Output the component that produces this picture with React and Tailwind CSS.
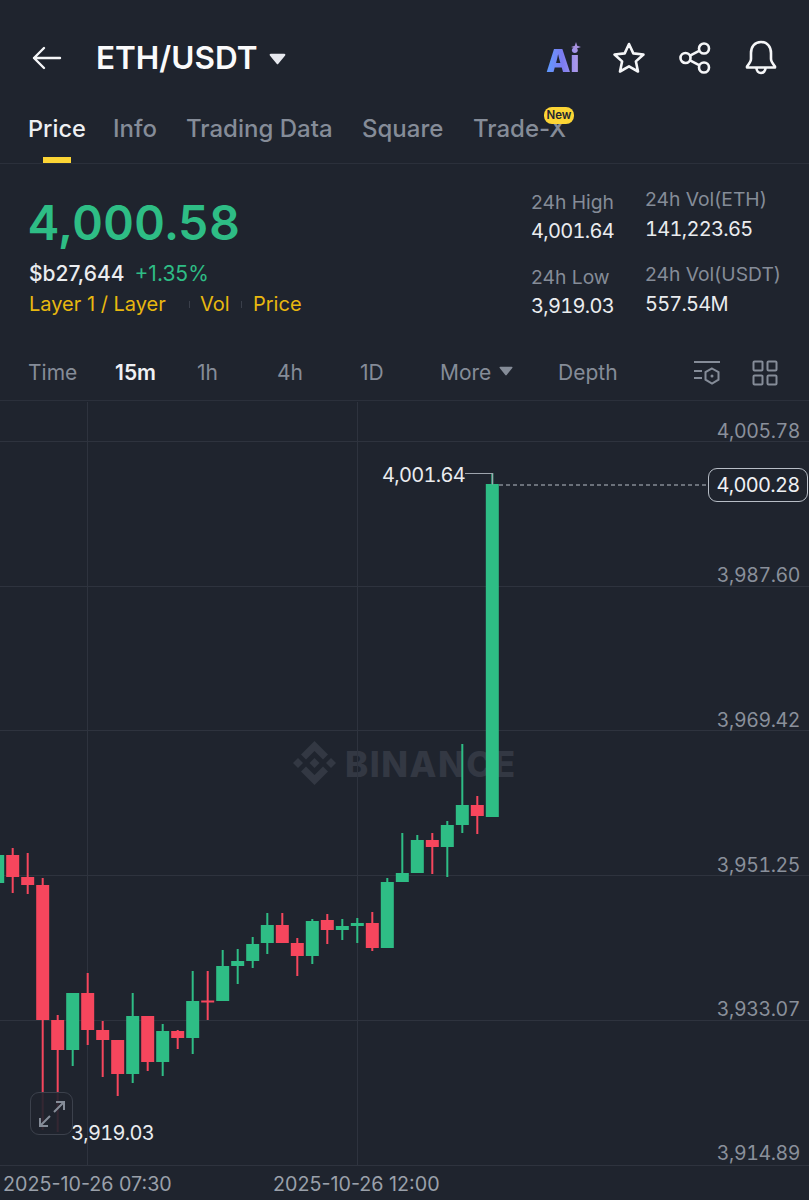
import React from "react";

const G = "#2EBD85";
const R = "#F6465D";
// x, wickTop, wickBottom, bodyTop, bodyBottom, up
const candles = [
  [-2.3, 846, 890, 855, 883, 1],
  [12.7, 848, 893, 855, 877, 0],
  [27.7, 853, 894, 877, 885, 0],
  [42.7, 878, 1130, 885, 1020, 0],
  [57.7, 1015, 1132, 1020, 1050, 0],
  [72.7, 993, 1066, 993, 1050, 1],
  [87.7, 973, 1045, 993, 1030, 0],
  [102.7, 1021, 1077, 1030, 1040, 0],
  [117.7, 1040, 1096, 1040, 1074, 0],
  [132.7, 993, 1083, 1016, 1074, 1],
  [147.7, 1016, 1071, 1016, 1062, 0],
  [162.7, 1024, 1076, 1031, 1062, 1],
  [177.7, 1030, 1049, 1031, 1038, 0],
  [192.7, 971, 1054, 1001, 1038, 1],
  [207.7, 971, 1020, 1000.5, 1002.5, 0],
  [222.7, 950, 1001, 966, 1001, 1],
  [237.7, 949, 984, 961, 966, 1],
  [252.7, 937, 968, 944, 961, 1],
  [267.3, 913, 954, 925, 943, 1],
  [282.3, 913, 943, 925, 943, 0],
  [297.3, 938, 976, 943, 956, 0],
  [312.3, 919, 964, 921, 956, 1],
  [327.3, 914, 944, 920, 930, 0],
  [342.3, 919, 940, 926, 930, 1],
  [357.3, 918, 943, 923, 926, 1],
  [372.3, 912, 951, 923, 948, 0],
  [387.3, 878, 948, 882, 948, 1],
  [402.3, 833, 882, 873, 882, 1],
  [417.3, 835, 873, 840, 873, 1],
  [432.3, 833, 874, 840, 847, 0],
  [447.3, 821, 877, 825, 847, 1],
  [462.3, 744, 833, 805, 825, 1],
  [477.3, 796, 834, 805, 816, 0],
  [492.3, 473, 817, 484, 817, 1],
];

function Caret({ className }) {
  return (
    <svg className={className} viewBox="0 0 16 11" fill="currentColor">
      <path d="M1.6 0.5h12.8a1 1 0 0 1 .8 1.6L8.8 10a1 1 0 0 1-1.6 0L.8 2.1A1 1 0 0 1 1.6.5z" />
    </svg>
  );
}

function Chart() {
  return (
    <svg className="absolute inset-0 w-[809px] h-[799px]" viewBox="0 401 809 799">
      {[441, 586, 730, 875, 1020, 1165].map((y) => (
        <line key={y} x1="0" x2="809" y1={y + 0.5} y2={y + 0.5} stroke="#2E333E" strokeWidth="1" />
      ))}
      {[87.5, 357.5].map((x) => (
        <line key={x} x1={x} x2={x} y1="402" y2="1165" stroke="#2E333E" strokeWidth="1" />
      ))}
      <g fill="#333843" transform="translate(314.5 763)">
        <path d="M0-22L13.500-8.500 8.500-3.500 0-12-8.500-3.500-13.500-8.500z" />
        <path d="M0 22L13.500 8.500 8.500 3.500 0 12-8.500 3.500-13.500 8.500z" />
        <path d="M0-5L5 0 0 5-5 0z" />
        <path d="M-16.500-5L-11.500 0-16.500 5-21.500 0z" />
        <path d="M16.500-5L21.500 0 16.500 5 11.500 0z" />
      </g>
      {candles.map(([x, wt, wb, bt, bb, up], i) => (
        <g key={i} fill={up ? G : R}>
          <rect x={x - 1} y={wt} width="2" height={wb - wt} />
          <rect x={x - 6.5} y={bt} width="13" height={bb - bt} />
        </g>
      ))}
      <path d="M465 473.5h27.5v11" fill="none" stroke="#9EA4AD" strokeWidth="1.2" />
      <line x1="499" x2="707" y1="485" y2="485" stroke="#B7BDC6" strokeWidth="1" strokeDasharray="4 3" />
    </svg>
  );
}

function AxisLabel({ top, children }) {
  return (
    <div className={`absolute right-[9px] text-[19.500px] leading-[24px] tabular-nums tracking-[-0.400px] text-[#8A909B] ${top}`}>{children}</div>
  );
}

export default function App() {
  return (
    <div
      className="w-[809px] h-[1200px] overflow-hidden bg-[#1F242E] text-white"
      style={{ fontFamily: "Inter, 'Liberation Sans', sans-serif" }}
    >
      {/* top bar */}
      <div className="h-[116px] w-full flex items-center">
        <svg className="ml-[32px] w-[30px] h-[24px]" viewBox="0 0 30 24" fill="none" stroke="#F5F6F8" strokeWidth="2.4" strokeLinecap="round" strokeLinejoin="round">
          <path d="M28 12H2M12 2L2 12l10 10" />
        </svg>
        <div className="ml-[34px] text-[31.500px] leading-[40px] font-semibold text-[#FAFAFB]">ETH/USDT</div>
        <Caret className="ml-[11px] mt-[1px] w-[17px] h-[12px] text-[#E6E8EE]" />
        <div className="ml-auto mr-[31px] flex items-center">
          <div className="relative w-[36px] h-[32px] mr-[30px] mt-[6px]">
            <span className="absolute left-0 top-[-3px] text-[31px] leading-[38px] font-black tracking-[-0.500px] bg-gradient-to-r from-[#5B9BFF] via-[#7B7BF0] to-[#B39CE8] bg-clip-text text-transparent">Ai</span>
            <svg className="absolute left-[25px] top-[-3px] w-[10px] h-[10px]" viewBox="0 0 10 10" fill="#A892E0">
              <path d="M5 0l1.200 3.800L10 5 6.200 6.200 5 10 3.800 6.200 0 5l3.800-1.200z" />
            </svg>
          </div>
          <svg className="w-[34px] h-[34px] mr-[32px]" viewBox="0 0 34 34" fill="none" stroke="#F5F6F8" strokeWidth="2.6" strokeLinejoin="round">
            <path d="M17 3l4.300 9.400 10.200 1.100-7.600 6.900 2.100 10.100L17 25.400l-9 5.100 2.100-10.100-7.600-6.900 10.200-1.100z" />
          </svg>
          <svg className="w-[34px] h-[34px] mr-[32px]" viewBox="0 0 34 34" fill="none" stroke="#F5F6F8" strokeWidth="2.6">
            <circle cx="26" cy="7.500" r="5" />
            <circle cx="26" cy="26.500" r="5" />
            <circle cx="7.500" cy="17" r="5" />
            <path d="M12 14.700l9.600-5M12 19.300l9.600 5" />
          </svg>
          <svg className="w-[34px] h-[36px]" viewBox="0 0 34 36" fill="none" stroke="#F5F6F8" strokeWidth="2.6" strokeLinejoin="round">
            <path d="M17 2c-6.500 0-10 5-10 11v6c0 2.500-1.600 4.500-4 7.500v1h28v-1c-2.400-3-4-5-4-7.500v-6c0-6-3.500-11-10-11z" />
            <path d="M12.500 28c0 3 2 5 4.500 5s4.500-2 4.500-5" />
          </svg>
        </div>
      </div>

      {/* tabs */}
      <div className="h-[48px] border-b border-[#2B303B] flex text-[24px] leading-[26px] text-[#858C98] font-medium">
        <div className="ml-[28px] w-[85px] flex flex-col">
          <span className="text-[#EEF0F3] text-[23.500px]">Price</span>
          <span className="mt-[15px] ml-[15px] w-[28px] h-[6px] bg-[#FCD535]" />
        </div>
        <div className="w-[73px]">Info</div>
        <div className="w-[176px]">Trading Data</div>
        <div className="w-[111px]">Square</div>
        <div className="relative">
          Trade-X
          <span className="absolute left-[71px] top-[-9px] w-[30px] h-[17px] rounded-[8px] bg-[#FCD535] text-[#1F2430] text-[11.500px] leading-[17px] font-semibold text-center">New</span>
        </div>
      </div>

      {/* market stats */}
      <div className="h-[181px] flex">
        <div className="w-[531px] pl-[28px] pt-[35px]">
          <div className="text-[48px] leading-[48px] font-semibold tabular-nums text-[#2EBD85]">4,000.58</div>
          <div className="mt-[13px] ml-[1px] flex text-[21px] leading-[28px]">
            <span className="text-[#EAECEF] font-medium">$b27,644</span>
            <span className="ml-[10px] text-[#2EBD85]">+1.35%</span>
          </div>
          <div className="mt-[2px] ml-[1px] flex items-center text-[20px] leading-[28px] text-[#E8B80F]">
            <span className="w-[160px]">Layer 1 / Layer</span>
            <span className="w-[1px] h-[7px] bg-[#3A3F4A]" />
            <span className="ml-[10px] w-[41px]">Vol</span>
            <span className="w-[1px] h-[7px] bg-[#3A3F4A]" />
            <span className="ml-[11px]">Price</span>
          </div>
        </div>
        <div className="w-[114px] pt-[24px] text-[19.300px] leading-[28px]">
          <div className="text-[#858C98]">24h High</div>
          <div className="mt-[1px] text-[20px] tabular-nums tracking-[-0.700px] text-[#EAECEF]">4,001.64</div>
          <div className="mt-[18px] text-[#858C98]">24h Low</div>
          <div className="mt-[1px] text-[20px] tabular-nums tracking-[-0.700px] text-[#EAECEF]">3,919.03</div>
        </div>
        <div className="pt-[21px] text-[19.300px] leading-[28px]">
          <div className="text-[#858C98]">24h Vol(ETH)</div>
          <div className="mt-[2px] text-[20px] tabular-nums tracking-[-0.700px] text-[#EAECEF]">141,223.65</div>
          <div className="mt-[17px] text-[#858C98]">24h Vol(USDT)</div>
          <div className="mt-[2px] text-[20px] tabular-nums tracking-[-0.800px] text-[#EAECEF]">557.54M</div>
        </div>
      </div>

      {/* timeframe row */}
      <div className="h-[56px] border-b border-[#2B303B] flex items-center text-[21px] leading-[28px] text-[#858C98]">
        <div className="ml-[28px] w-[87px]">Time</div>
        <div className="w-[82px] text-[#F0F1F4] font-semibold">15m</div>
        <div className="w-[80px]">1h</div>
        <div className="w-[83px]">4h</div>
        <div className="w-[80px]">1D</div>
        <div className="w-[118px] flex items-center">
          More
          <Caret className="ml-[8px] mb-[3px] w-[14px] h-[10px] text-[#858C98]" />
        </div>
        <div className="w-[135px]">Depth</div>
        <svg className="w-[28px] h-[26px]" viewBox="0 0 28 26" fill="none" stroke="#858C98" strokeWidth="2">
          <path d="M1 2h26M1 11h8M1 18h8" />
          <path d="M19 8.500l6.500 3.700v7.400L19 23.500l-6.500-3.900v-7.400z" />
          <circle cx="19" cy="16" r="1.500" fill="#858C98" stroke="none" />
        </svg>
        <svg className="ml-[31px] w-[26px] h-[26px]" viewBox="0 0 26 26" fill="none" stroke="#858C98" strokeWidth="2">
          <rect x="1.500" y="1.500" width="9" height="9" rx="1" />
          <rect x="15.500" y="1.500" width="9" height="9" rx="1" />
          <rect x="1.500" y="15.500" width="9" height="9" rx="1" />
          <rect x="15.500" y="15.500" width="9" height="9" rx="1" />
        </svg>
      </div>

      {/* chart canvas */}
      <div className="relative h-[799px]">
        <div className="absolute left-[345px] top-[343px] text-[35px] leading-[40px] font-extrabold tracking-[1.500px] text-[#333843]">BINANCE</div>
        <Chart />

        <AxisLabel top="top-[18px]">4,005.78</AxisLabel>
        <AxisLabel top="top-[162px]">3,987.60</AxisLabel>
        <AxisLabel top="top-[307px]">3,969.42</AxisLabel>
        <AxisLabel top="top-[452px]">3,951.25</AxisLabel>
        <AxisLabel top="top-[596px]">3,933.07</AxisLabel>
        <AxisLabel top="top-[740px]">3,914.89</AxisLabel>

        <div className="absolute left-[382px] top-[62px] text-[20px] leading-[24px] tabular-nums tracking-[-0.700px] text-[#EAECEF]">4,001.64</div>
        <div className="absolute left-[708px] top-[67px] w-[100px] h-[34px] rounded-[9px] border border-[#B7BDC6] bg-[#1F242E] text-center text-[20px] leading-[32px] tabular-nums tracking-[-0.700px] text-[#F0F1F4]">4,000.28</div>
        <div className="absolute left-[71px] top-[720px] text-[20px] leading-[24px] tabular-nums tracking-[-0.700px] text-[#EAECEF]">3,919.03</div>

        <div className="absolute left-[30px] top-[691px] w-[43px] h-[43px] rounded-[9px] border border-[#3C414C] bg-[#1F242E]/90 flex items-center justify-center">
          <svg className="w-[28px] h-[28px]" viewBox="0 0 28 28" fill="none" stroke="#858C98" strokeWidth="2">
            <path d="M16 12l10-10M18 2h8v8M12 16L2 26M2 18v8h8" />
          </svg>
        </div>

        <div className="absolute left-[3px] top-[771px] text-[19.700px] leading-[24px] text-[#9AA0AA]">2025-10-26 07:30</div>
        <div className="absolute left-[273px] top-[771px] text-[19.700px] leading-[24px] text-[#9AA0AA]">2025-10-26 12:00</div>
      </div>
    </div>
  );
}
